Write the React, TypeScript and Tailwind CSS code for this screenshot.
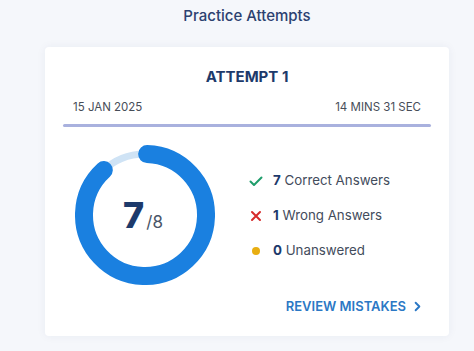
import { ChevronRight } from "lucide-react";

const stats = [
  { kind: "correct", count: 7, label: "Correct Answers" },
  { kind: "wrong", count: 1, label: "Wrong Answers" },
  { kind: "skipped", count: 0, label: "Unanswered" },
];

function StatIcon({ kind }: { kind: string }) {
  if (kind === "correct") {
    return (
      <svg viewBox="0 0 16 16" className="h-[16px] w-[16px]" fill="none" stroke="#1f9d6b" strokeWidth={2} strokeLinecap="round" strokeLinejoin="round">
        <path d="M2.5 8.5l3.5 3.5 7.5-7.5" />
      </svg>
    );
  }
  if (kind === "wrong") {
    return (
      <svg viewBox="0 0 16 16" className="h-[16px] w-[16px]" fill="none" stroke="#d62b2b" strokeWidth={2} strokeLinecap="round">
        <path d="M4 4l8 8M12 4l-8 8" />
      </svg>
    );
  }
  return (
    <span className="flex h-[16px] w-[16px] items-center justify-center">
      <span className="h-[8px] w-[8px] rounded-full bg-[#e8ae12]" />
    </span>
  );
}

function ScoreRing({ score, total }: { score: number; total: number }) {
  const r = 61;
  const c = 2 * Math.PI * r;
  const done = (score / total) * c;
  return (
    <div className="relative h-[140px] w-[140px] shrink-0">
      <svg viewBox="0 0 140 140" className="h-full w-full -rotate-90">
        <circle cx="70" cy="70" r={r} fill="none" stroke="#cfe3f5" strokeWidth={7} />
        <circle
          cx="70"
          cy="70"
          r={r}
          fill="none"
          stroke="#1a80e0"
          strokeWidth={18}
          strokeLinecap="round"
          strokeDasharray={`${done} ${c}`}
          transform="rotate(2 70 70)"
        />
      </svg>
      <div className="absolute inset-0 flex items-center justify-center pr-[4px]">
        <span className="text-[36px] leading-none font-extrabold text-[#1d3a6b]">{score}</span>
        <span className="mt-[14px] ml-[2px] text-[17px] leading-none text-[#4a5568]">/{total}</span>
      </div>
    </div>
  );
}

export default function App() {
  return (
    <div className="flex h-[351px] w-[474px] flex-col items-center bg-[#f5f7fb] pl-[20px] font-['Inter',sans-serif]">
      <h2 className="mt-[6px] text-[15px] leading-[20px] font-medium text-[#2c4170]">Practice Attempts</h2>

      <div className="mt-[21px] h-[289px] w-[404px] rounded-[4px] bg-white shadow-[0_0_10px_rgba(30,50,100,0.06)]">
        <p className="pt-[20px] text-center text-[15px] leading-[20px] font-bold text-[#1d3a6b]">ATTEMPT 1</p>

        <div className="mx-[18px] mt-[12px] flex justify-between px-[10px] text-[11.5px] leading-[16px] text-[#474d58]">
          <span>15 JAN 2025</span>
          <span>14 MINS 31 SEC</span>
        </div>
        <div className="mx-[18px] mt-[9px] h-[3px] rounded-full bg-[#a9b1de]" />

        <div className="mt-[18px] flex pl-[30px]">
          <ScoreRing score={7} total={8} />

          <div className="ml-[33px] flex flex-1 flex-col pr-[24px]">
            <div className="mt-[26px] flex flex-col gap-[15px]">
              {stats.map((s) => (
                <div key={s.kind} className="flex h-[20px] items-center gap-[9px] text-[13.3px]">
                  <StatIcon kind={s.kind} />
                  <span className="text-[#434c5c]">
                    <span className="font-bold text-[#1d3a6b]">{s.count}</span> {s.label}
                  </span>
                </div>
              ))}
            </div>

            <button
              type="button"
              className="mt-[36px] flex items-center gap-[4px] self-end text-[13px] leading-[18px] font-semibold text-[#2b78c5]"
            >
              REVIEW MISTAKES
              <ChevronRight className="h-[15px] w-[15px]" strokeWidth={3} />
            </button>
          </div>
        </div>
      </div>
    </div>
  );
}
